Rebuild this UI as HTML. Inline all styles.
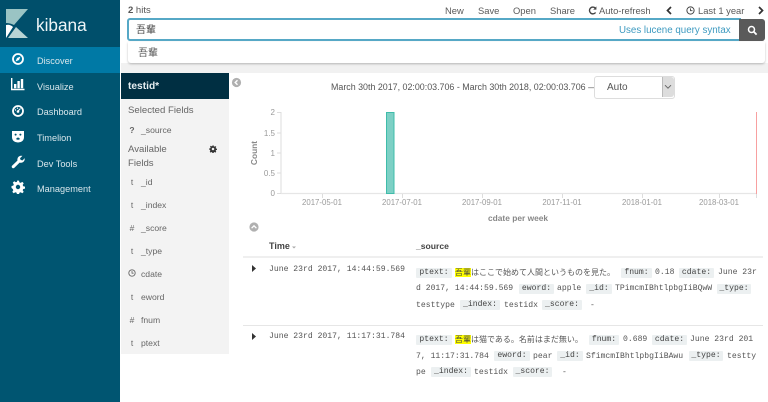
<!DOCTYPE html>
<html lang="en"><head><meta charset="utf-8"><title>Kibana Discover</title>
<style>
html,body{margin:0;padding:0;background:#fff}
body{width:768px;height:402px;overflow:hidden;position:relative;font-family:"Liberation Sans","Noto Sans CJK JP",sans-serif;font-size:9.5px;color:#555}
.a,.a *{white-space:nowrap}
.a{position:absolute}
.nav{position:absolute;left:37px;color:#d8e6eb;font-size:9.2px;line-height:12px}
.ni{position:absolute}
.tb{position:absolute;top:5px;line-height:12px;color:#5a5a5a;font-size:9.4px}
.f{position:absolute;left:141px;font-size:8.6px;color:#666;line-height:12px}
.ft{position:absolute;left:128px;width:8px;text-align:center;font-size:8.5px;color:#666;line-height:12px}
.y{position:absolute;right:493px;font-size:8px;color:#9a9a9a;line-height:10px}
.x{position:absolute;top:198px;width:50px;text-align:center;font-size:7.8px;color:#9a9a9a;line-height:10px}
.m{position:absolute;font-family:"Liberation Mono","Noto Sans CJK JP",monospace;font-size:8.1px;line-height:11px;color:#555;white-space:nowrap}
.b{position:absolute;height:10px;background:#ecf0f1;border-radius:1px;font-family:"Liberation Mono",monospace;font-size:8.1px;line-height:10px;color:#444;text-align:center}
.h{position:absolute;width:16px;height:9px;background:#ffff00;font-family:"Noto Sans CJK JP",sans-serif;font-size:8px;line-height:9px;color:#444;white-space:nowrap}
.j{position:absolute;font-family:"Noto Sans CJK JP",sans-serif;font-size:8px;line-height:11px;color:#555;white-space:nowrap}
</style></head><body>

<div class="a" style="left:0;top:0;width:120px;height:402px;background:#005571"></div>
<div class="a" style="left:0;top:0;width:120px;height:47px;background:#004f6b"></div>
<div class="a" style="left:0;top:47px;width:120px;height:26px;background:#0079a5"></div>
<svg class="a" style="left:6px;top:9px" width="23" height="29" viewBox="0 0 23 29">
<path d="M0 0H22L8 16Q4 14 0 14Z" fill="#9ac4c4"/>
<path d="M0 16Q4 15 7 18L0 29Z" fill="#fff"/>
<path d="M2 29L10 18L22 29Z" fill="#b8d4d4"/>
</svg>
<div class="a" style="left:36px;top:14px;font-size:17.2px;line-height:22px;color:#eef5f7">kibana</div>

<svg class="ni" style="left:11px;top:52px" width="14" height="14" viewBox="0 0 14 14"><circle cx="7" cy="7" r="5" fill="none" stroke="#fff" stroke-width="1.8"/><path d="M9.5 4.5L8 8L4.5 9.5L6 6Z" fill="#fff"/></svg>
<svg class="ni" style="left:11px;top:78px" width="14" height="13" viewBox="0 0 14 13"><path d="M.7 0V11.5H13.5" fill="none" stroke="#fff" stroke-width="1.4"/><path d="M3 6h2.4v4.2H3zM6.4 3h2.4v7.2H6.4zM9.8 1h2.4v9.2H9.8z" fill="#fff"/></svg>
<svg class="ni" style="left:11px;top:104px" width="14" height="14" viewBox="0 0 14 14"><circle cx="7" cy="7" r="5" fill="none" stroke="#fff" stroke-width="1.8"/><circle cx="7" cy="7.5" r="1.3" fill="#fff"/><path d="M7 7L9.5 4.5" stroke="#fff" stroke-width="1.1"/><circle cx="4.5" cy="6" r=".7" fill="#fff"/><circle cx="6.5" cy="4.2" r=".7" fill="#fff"/></svg>
<svg class="ni" style="left:11px;top:130px" width="14" height="13" viewBox="0 0 14 13"><path d="M1 1H13V7Q13 12 7 12.5Q1 12 1 7Z" fill="#fff"/><circle cx="4.6" cy="4.6" r="1" fill="#005571"/><circle cx="9.4" cy="4.6" r="1" fill="#005571"/><path d="M5 9Q7 6 9 9Q7 10.5 5 9Z" fill="#005571"/></svg>
<svg class="ni" style="left:11px;top:155px" width="14" height="14" viewBox="0 0 14 14"><path d="M1.8 13.2Q.2 12.4.9 10.9L6.4 5.6Q6 2 9 .9Q10.3.5 11.4.9L9 3.2L9.7 5L11.7 5.4L13.6 3.1Q14 5.6 12.2 7Q10.5 8.1 8.6 7.6L3.4 12.8Q2.6 13.5 1.8 13.2Z" fill="#fff"/></svg>
<svg class="ni" style="left:11px;top:180px" width="14" height="14" viewBox="0 0 14 14"><path d="M6 .6h2l.4 1.8 1.3.5 1.6-1 1.4 1.4-1 1.6.5 1.3 1.8.4v2l-1.8.4-.5 1.3 1 1.6-1.4 1.4-1.6-1-1.3.5-.4 1.8H6l-.4-1.8-1.3-.5-1.6 1-1.4-1.4 1-1.6-.5-1.3L.5 8V6l1.8-.4.5-1.3-1-1.6 1.4-1.4 1.6 1 1.3-.5z" fill="#fff"/><circle cx="7" cy="7" r="2.2" fill="#005571"/></svg>

<div class="nav" style="top:55px">Discover</div>
<div class="nav" style="top:81px">Visualize</div>
<div class="nav" style="top:106px">Dashboard</div>
<div class="nav" style="top:132px">Timelion</div>
<div class="nav" style="top:158px">Dev Tools</div>
<div class="nav" style="top:183px">Management</div>

<div class="a" style="left:121px;top:63px;width:647px;height:10px;background:#f1f1f1"></div>
<div class="a" style="left:128px;top:5px;line-height:12px;font-size:9.5px;color:#555"><b>2</b> hits</div>
<div class="tb" style="left:445px">New</div>
<div class="tb" style="left:478px">Save</div>
<div class="tb" style="left:513px">Open</div>
<div class="tb" style="left:550px">Share</div>
<svg class="a" style="left:588px;top:6px" width="9" height="9" viewBox="0 0 9 9"><path d="M7.4 2.2A3.4 3.4 0 1 0 7.6 6.5" fill="none" stroke="#444" stroke-width="1.4"/><path d="M8.4 .4V3.6H5.2Z" fill="#444"/></svg>
<div class="tb" style="left:599px">Auto-refresh</div>
<svg class="a" style="left:666px;top:6px" width="6" height="9" viewBox="0 0 6 9"><path d="M5 1L1.5 4.5L5 8" fill="none" stroke="#333" stroke-width="1.7"/></svg>
<svg class="a" style="left:686px;top:6px" width="9" height="9" viewBox="0 0 9 9"><circle cx="4.5" cy="4.5" r="3.6" fill="none" stroke="#444" stroke-width="1"/><path d="M4.5 2.4V4.7H6.5" fill="none" stroke="#444" stroke-width=".9"/></svg>
<div class="tb" style="left:698px">Last 1 year</div>
<svg class="a" style="left:758px;top:6px" width="6" height="9" viewBox="0 0 6 9"><path d="M1 1L4.5 4.5L1 8" fill="none" stroke="#333" stroke-width="1.7"/></svg>

<div class="a" style="left:127px;top:18px;width:610px;height:19px;border:2px solid #56a8c6;border-radius:3px 0 0 3px;background:#fff"></div>
<div class="a" style="left:136px;top:24px;font-size:10px;line-height:14px;color:#444">吾輩</div>
<div class="a" style="left:619px;top:24px;font-size:9.75px;line-height:13px;color:#3d9ac0">Uses lucene query syntax</div>
<div class="a" style="left:739px;top:19px;width:26px;height:22px;background:#5a5a5a;border-radius:0 3px 3px 0"></div>
<svg class="a" style="left:747px;top:25px" width="11" height="11" viewBox="0 0 11 11"><circle cx="4.5" cy="4.5" r="3" fill="none" stroke="#fff" stroke-width="1.5"/><path d="M6.8 6.8L9.6 9.6" stroke="#fff" stroke-width="1.8"/></svg>
<div class="a" style="left:128px;top:42px;width:637px;height:21px;background:#fff;border-radius:0 0 3px 3px;box-shadow:0 1px 2px rgba(0,0,0,.25)"></div>
<div class="a" style="left:138px;top:47px;font-size:10px;line-height:14px;color:#555">吾輩</div>

<div class="a" style="left:121px;top:73px;width:108px;height:281px;background:#f3f3f3"></div>
<div class="a" style="left:121px;top:73px;width:108px;height:26px;background:#002f42"></div>
<div class="a" style="left:128px;top:81px;font-size:10.2px;font-weight:bold;line-height:12px;color:#e6eef1">testid*</div>
<div class="a" style="left:128px;top:105px;font-size:9.6px;line-height:12px;color:#666">Selected Fields</div>
<div class="ft" style="top:124px;font-weight:bold">?</div><div class="f" style="top:124px">_source</div>
<div class="a" style="left:128px;top:143px;font-size:9.6px;line-height:14.3px;color:#666">Available<br>Fields</div>
<svg class="a" style="left:209px;top:145px" width="8" height="8" viewBox="0 0 14 14"><path d="M6 .6h2l.4 1.8 1.3.5 1.6-1 1.4 1.4-1 1.6.5 1.3 1.8.4v2l-1.8.4-.5 1.3 1 1.6-1.4 1.4-1.6-1-1.3.5-.4 1.8H6l-.4-1.8-1.3-.5-1.6 1-1.4-1.4 1-1.6-.5-1.3L.5 8V6l1.8-.4.5-1.3-1-1.6 1.4-1.4 1.6 1 1.3-.5z" fill="#333"/><circle cx="7" cy="7" r="2.2" fill="#f3f3f3"/></svg>
<div class="ft" style="top:176px">t</div><div class="f" style="top:176px">_id</div>
<div class="ft" style="top:199px">t</div><div class="f" style="top:199px">_index</div>
<div class="ft" style="top:222px">#</div><div class="f" style="top:222px">_score</div>
<div class="ft" style="top:245px">t</div><div class="f" style="top:245px">_type</div>
<svg class="a" style="left:128px;top:269px" width="8" height="8" viewBox="0 0 8 8"><circle cx="4" cy="4" r="3.2" fill="none" stroke="#666" stroke-width=".9"/><path d="M4 2V4.2H5.6" fill="none" stroke="#666" stroke-width=".8"/></svg>
<div class="f" style="top:268px">cdate</div>
<div class="ft" style="top:291px">t</div><div class="f" style="top:291px">eword</div>
<div class="ft" style="top:314px">#</div><div class="f" style="top:314px">fnum</div>
<div class="ft" style="top:337px">t</div><div class="f" style="top:337px">ptext</div>

<svg class="a" style="left:231px;top:77px" width="11" height="11" viewBox="0 0 11 11"><circle cx="5.5" cy="5.5" r="4.6" fill="#b0b0b0"/><path d="M6.5 3.2L4.2 5.5L6.5 7.8" fill="none" stroke="#fff" stroke-width="1.4"/></svg>

<div class="a" style="left:331px;top:81px;font-size:8.9px;line-height:12px;color:#555">March 30th 2017, 02:00:03.706 - March 30th 2018, 02:00:03.706 —</div>
<div class="a" style="left:594px;top:76px;width:79px;height:21px;border:1px solid #ddd;border-radius:3px;background:#fff"></div>
<div class="a" style="left:607px;top:81px;font-size:10px;line-height:13px;color:#555">Auto</div>
<div class="a" style="left:662px;top:77px;width:11px;height:20px;background:#ddd;border-left:1px solid #bbb;border-radius:0 3px 3px 0"></div>
<svg class="a" style="left:664px;top:84px" width="8" height="6" viewBox="0 0 8 6"><path d="M1 1.2L4 4.2L7 1.2" fill="none" stroke="#666" stroke-width="1"/></svg>

<svg class="a" style="left:0;top:0" width="768" height="402">
<path d="M281 112V194M277 112.5H281M277 133H281M277 153H281M277 173H281M277 193.5H281" fill="none" stroke="#ddd" stroke-width="1"/>
<path d="M281 193.5H756" stroke="#e6e6e6" stroke-width="1.2"/>
<path d="M322.5 194V198M402.5 194V198M482.5 194V198M562.5 194V198M642.5 194V198M719.5 194V198M756.5 194V198" stroke="#ddd" stroke-width="1"/>
<rect x="386.5" y="112.5" width="7.5" height="81" fill="#7dd0c5" stroke="#3fbcaa" stroke-width="1"/>
<path d="M756.5 112V194" stroke="#f8a0a0" stroke-width="1"/>
<circle cx="254" cy="227" r="4.6" fill="#b0b0b0"/><path d="M251.6 228.2L254 225.8L256.4 228.2" fill="none" stroke="#fff" stroke-width="1.3"/>
<path d="M243 257H763" stroke="#efefef" stroke-width="2"/>
<path d="M243 325.5H763" stroke="#e6e6e6" stroke-width="1"/>
<path d="M252 265L256 268.5L252 272Z" fill="#333"/>
<path d="M252 333L256 336.5L252 340Z" fill="#333"/>
<path d="M292 246.5H296L294 248.5Z" fill="#aaa"/>
</svg>

<div class="y" style="top:108px">2</div><div class="y" style="top:129px">1.5</div><div class="y" style="top:149px">1</div><div class="y" style="top:169px">0.5</div><div class="y" style="top:189px">0</div>
<div class="x" style="left:297px">2017-05-01</div><div class="x" style="left:377px">2017-07-01</div><div class="x" style="left:457px">2017-09-01</div><div class="x" style="left:537px">2017-11-01</div><div class="x" style="left:617px">2018-01-01</div><div class="x" style="left:694px">2018-03-01</div>
<div class="a" style="left:488px;top:213px;font-size:8.4px;font-weight:bold;line-height:11px;color:#888">cdate per week</div>
<div class="a" style="left:234px;top:148px;width:40px;text-align:center;transform:rotate(-90deg);font-size:8.4px;font-weight:bold;line-height:10px;color:#888">Count</div>

<div class="a" style="left:269px;top:241px;font-size:9px;font-weight:bold;line-height:11px;color:#444">Time</div>
<div class="a" style="left:416px;top:241px;font-size:8.6px;font-weight:bold;line-height:11px;color:#444">_source</div>

<div class="m" style="left:269px;top:264px">June 23rd 2017, 14:44:59.569</div>
<div class="b" style="left:416px;top:268px;width:36px">ptext:</div>
<div class="h" style="left:455px;top:268px">吾輩</div>
<div class="j" style="left:471px;top:267px">はここで始めて人間というものを見た。</div>
<div class="b" style="left:621px;top:268px;width:31px">fnum:</div>
<div class="m" style="left:655px;top:267px">0.18</div>
<div class="b" style="left:679px;top:268px;width:35px">cdate:</div>
<div class="m" style="left:718px;top:267px">June 23r</div>

<div class="m" style="left:416px;top:283px">d 2017, 14:44:59.569</div>
<div class="b" style="left:519px;top:284px;width:35px">eword:</div>
<div class="m" style="left:557px;top:283px">apple</div>
<div class="b" style="left:586px;top:284px;width:26px">_id:</div>
<div class="m" style="left:615px;top:283px">TPimcmIBhtlpbgIiBQwW</div>
<div class="b" style="left:717px;top:284px;width:34px">_type:</div>

<div class="m" style="left:416px;top:300px">testtype</div>
<div class="b" style="left:460px;top:300px;width:40px">_index:</div>
<div class="m" style="left:504px;top:300px">testidx</div>
<div class="b" style="left:542px;top:300px;width:40px">_score:</div>
<div class="m" style="left:590px;top:300px">-</div>

<div class="m" style="left:269px;top:331px">June 23rd 2017, 11:17:31.784</div>
<div class="b" style="left:416px;top:335px;width:36px">ptext:</div>
<div class="h" style="left:455px;top:335px">吾輩</div>
<div class="j" style="left:471px;top:334px">は猫である。名前はまだ無い。</div>
<div class="b" style="left:589px;top:335px;width:30px">fnum:</div>
<div class="m" style="left:623px;top:334px">0.689</div>
<div class="b" style="left:652px;top:335px;width:35px">cdate:</div>
<div class="m" style="left:690px;top:334px">June 23rd 201</div>

<div class="m" style="left:416px;top:351px">7, 11:17:31.784</div>
<div class="b" style="left:494px;top:351px;width:36px">eword:</div>
<div class="m" style="left:533px;top:351px">pear</div>
<div class="b" style="left:557px;top:351px;width:26px">_id:</div>
<div class="m" style="left:586px;top:351px">SfimcmIBhtlpbgIiBAwu</div>
<div class="b" style="left:689px;top:351px;width:34px">_type:</div>
<div class="m" style="left:727px;top:351px">testty</div>

<div class="m" style="left:416px;top:367px">pe</div>
<div class="b" style="left:431px;top:367px;width:40px">_index:</div>
<div class="m" style="left:474px;top:367px">testidx</div>
<div class="b" style="left:513px;top:367px;width:39px">_score:</div>
<div class="m" style="left:562px;top:367px">-</div>

</body></html>
